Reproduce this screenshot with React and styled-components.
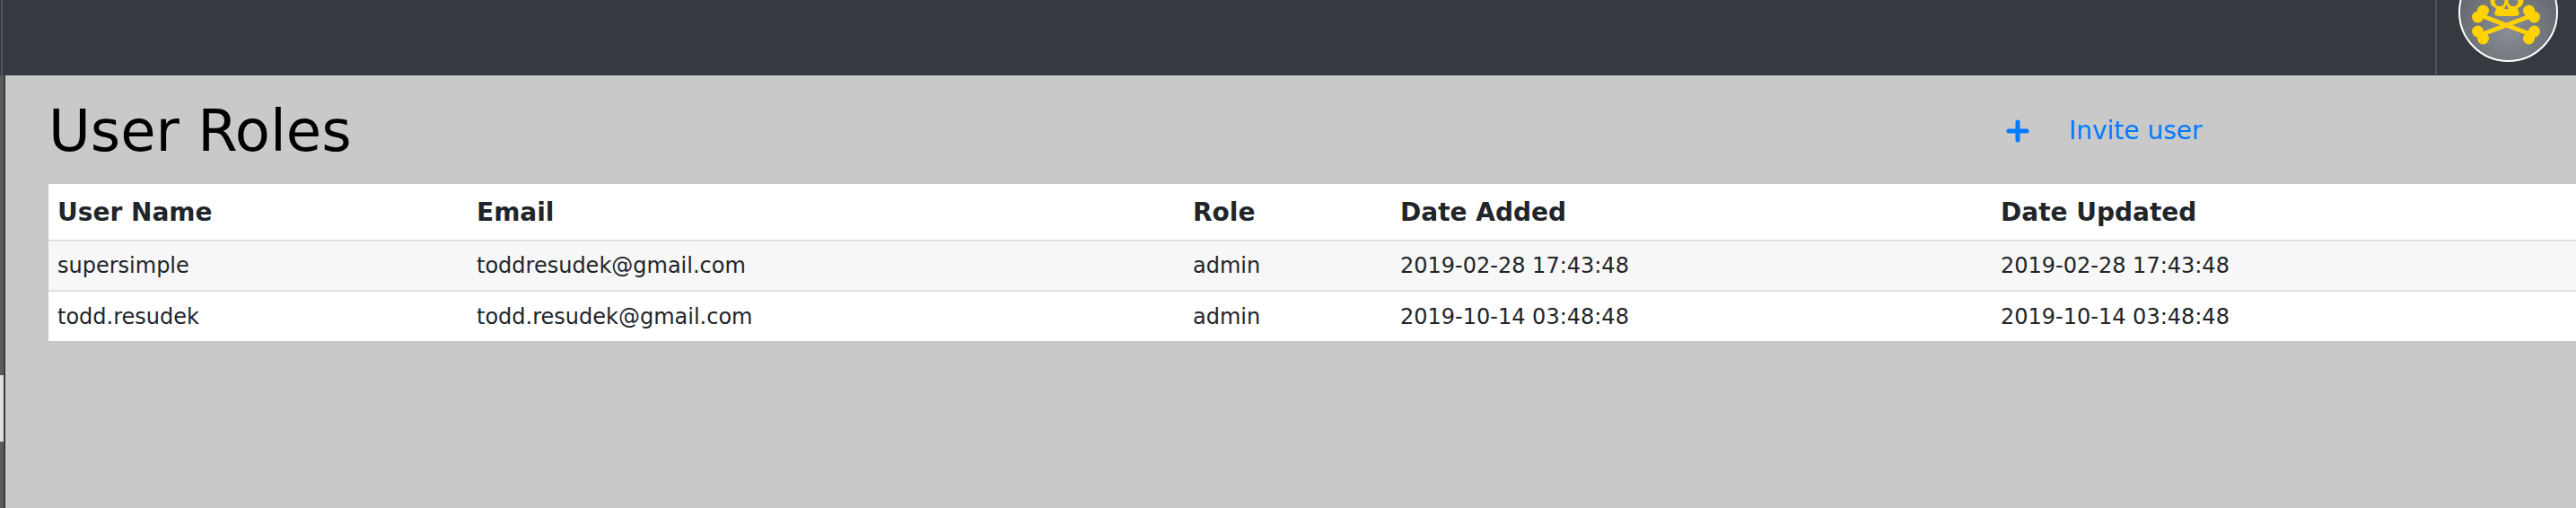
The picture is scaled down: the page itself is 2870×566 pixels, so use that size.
import React from "react";
import styled, { createGlobalStyle } from "styled-components";

const Global = createGlobalStyle`
  html, body { margin: 0; padding: 0; height: 100%; overflow: hidden; background: #c9c9c9; }
  #root { height: 100%; }
  * { box-sizing: border-box; }
`;
const Page = styled.div`
  width: 2870px; height: 566px; display: flex; overflow: hidden;
  font-family: "DejaVu Sans", sans-serif; background: #c9c9c9;
`;
const Rail = styled.div`
  width: 6px; flex: none; background: #343a40; display: flex; flex-direction: column;
`;
const RailTop = styled.div`
  width: 2px; height: 84px; margin-left: 1px; background: #4f5357;
`;
const RailEdge = styled.div`
  width: 4px; background: #5a5a5a; height: ${p => (p.$h ? `${p.$h}px` : "auto")}; flex: ${p => (p.$h ? "none" : 1)};
`;
const RailGap = styled.div`
  width: 4px; height: 74px; background: #dfdfdf;
`;
const Main = styled.div`
  flex: 1; min-width: 0; display: flex; flex-direction: column;
`;
const Header = styled.header`
  height: 84px; background: #343a40; display: flex; justify-content: flex-end; overflow: hidden;
`;
const UserArea = styled.div`
  width: 157px; height: 83px; border-left: 2px solid #4f5357; position: relative;
`;
const Avatar = styled.svg`
  position: absolute; left: 24px; top: -42px; width: 112px; height: 112px;
`;
const Content = styled.main`
  flex: 1; padding: 0 0 0 48px;
`;
const TitleRow = styled.div`
  height: 121px; display: flex; align-items: center; padding-top: 3px;
`;
const Title = styled.h1`
  margin: 0; font-weight: 400; font-size: 64px; line-height: 1.2; color: #000; width: 2181px;
`;
const InviteLink = styled.a`
  display: flex; align-items: center; gap: 44px; color: #007bff; font-size: 28px; line-height: 1.5;
`;
const Table = styled.table`
  width: 100%; border-collapse: collapse; table-layout: fixed; background: #fff; color: #212529;
`;
const HeadCell = styled.th`
  width: ${p => p.$w}px; text-align: left; font-size: 28px; font-weight: 700; padding: 0 10px;
  height: 63px; border-bottom: 2px solid #dee2e6;
`;
const Row = styled.tr`
  background: ${p => (p.$odd ? "#f7f7f7" : "#fff")};
  &:not(:last-child) td { border-bottom: 2px solid #dee2e6; }
`;
const Cell = styled.td`
  font-size: 24px; padding: 0 10px; height: 56px; white-space: nowrap;
`;

const cols = [
  ["User Name", 467], ["Email", 798], ["Role", 231], ["Date Added", 669], ["Date Updated", 651],
];
const rows = [
  ["supersimple", "toddresudek@gmail.com", "admin", "2019-02-28 17:43:48", "2019-02-28 17:43:48"],
  ["todd.resudek", "todd.resudek@gmail.com", "admin", "2019-10-14 03:48:48", "2019-10-14 03:48:48"],
];

const Logo = () => (
  <Avatar viewBox="0 0 112 112">
    <defs>
      <radialGradient id="av" cx="50%" cy="68%" r="55%">
        <stop offset="0%" stopColor="#8b8e94" />
        <stop offset="100%" stopColor="#66696f" />
      </radialGradient>
    </defs>
    <circle cx="55.5" cy="55.5" r="54.5" fill="url(#av)" stroke="#fff" strokeWidth="2" />
    <g fill="#ffd200">
      <path d="M27 60 L80 80 M80 60 L27 80" stroke="#ffd200" strokeWidth="5" />
      <circle cx="27.5" cy="54" r="6.5" /><circle cx="21.5" cy="61" r="6.5" />
      <circle cx="78.5" cy="54" r="6.5" /><circle cx="84.5" cy="61" r="6.5" />
      <circle cx="21.5" cy="77" r="6.5" /><circle cx="27.5" cy="85" r="6.5" />
      <circle cx="84.5" cy="77" r="6.5" /><circle cx="78.5" cy="85" r="6.5" />
      <path d="M34 30 H74 L72 46 Q70 50 66 51 L68 58 Q66 60 63 60 H45 Q42 60 40 58 L42 51 Q38 50 36 46 Z" />
    </g>
    <circle cx="46" cy="43.5" r="5.5" fill="#7b7f85" />
    <circle cx="61" cy="43.5" r="5.5" fill="#7b7f85" />
    <path d="M53.5 47 l-2.5 5 h5 z" fill="#7b7f85" />
  </Avatar>
);

const PlusIcon = () => (
  <svg width="26" height="26" viewBox="0 0 26 26">
    <path d="M13 3 V23 M3 13 H23" stroke="#007bff" strokeWidth="5" strokeLinecap="round" />
  </svg>
);

export default function App() {
  return (
    <Page>
      <Global />
      <Rail>
        <RailTop />
        <RailEdge $h={334} />
        <RailGap />
        <RailEdge />
      </Rail>
      <Main>
        <Header><UserArea><Logo /></UserArea></Header>
        <Content>
          <TitleRow>
            <Title>User Roles</Title>
            <InviteLink><PlusIcon />Invite user</InviteLink>
          </TitleRow>
          <Table>
            <thead><tr>{cols.map(([t, w]) => <HeadCell key={t} $w={w}>{t}</HeadCell>)}</tr></thead>
            <tbody>
              {rows.map((r, i) => (
                <Row key={r[0]} $odd={i === 0}>{r.map((c, j) => <Cell key={j}>{c}</Cell>)}</Row>
              ))}
            </tbody>
          </Table>
        </Content>
      </Main>
    </Page>
  );
}
